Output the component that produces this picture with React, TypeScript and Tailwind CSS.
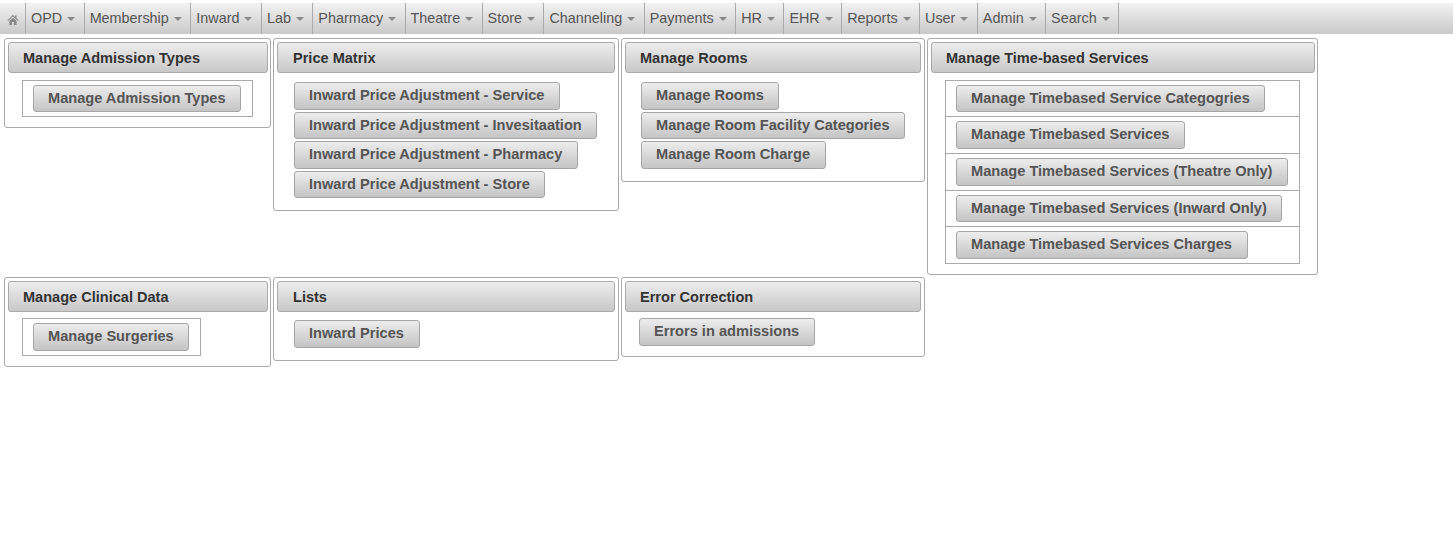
const navItems = ["OPD", "Membership", "Inward", "Lab", "Pharmacy", "Theatre", "Store", "Channeling", "Payments", "HR", "EHR", "Reports", "User", "Admin", "Search"];

const btn =
  "block w-fit h-[27.5px] pl-[14px] pr-[14.6px] rounded-[3px] border border-[#a6a6a6] bg-gradient-to-b from-[#ededed] to-[#c4c4c4] text-[14.6px] leading-[24px] font-bold text-[#555555] whitespace-nowrap";

function Btn({ label }: { label: string }) {
  return <div className={btn}>{label}</div>;
}

function Panel({ title, className, headerClass = "pl-[14px]", children }: { title: string; className: string; headerClass?: string; children: React.ReactNode }) {
  return (
    <div className={`${className} rounded-[3px] border border-[#aaaaaa] bg-white p-[3px]`}>
      <div className={`${headerClass} h-[31px] rounded-[3px] border border-[#aaaaaa] bg-gradient-to-b from-[#ededed] to-[#c8c8c8] text-[14.55px] leading-[31px] font-bold text-[#333333] whitespace-nowrap`}>
        {title}
      </div>
      {children}
    </div>
  );
}

function BoxTable({ labels, className = "mt-[6.8px]" }: { labels: string[]; className?: string }) {
  return (
    <div className={`${className} ml-[14px] w-fit border border-[#aaaaaa]`}>
      {labels.map((l, i) => (
        <div key={l} className={i > 0 ? "border-t border-[#aaaaaa] pt-[4.1px] pr-[11px] pb-[4px] pl-[10px]" : "pt-[4px] pr-[11px] pb-[4.1px] pl-[10px]"}>
          <Btn label={l} />
        </div>
      ))}
    </div>
  );
}

export default function App() {
  return (
    <div className="min-h-[546px] bg-white font-['Liberation_Sans',Arial,sans-serif]">
      <div className="h-[3px]" />
      <div className="flex h-[31px] items-stretch bg-gradient-to-b from-[#f2f2f2] to-[#c9c9c9]">
        <div className="flex w-[26px] items-center justify-center border-r border-[#aaaaaa] pl-[1px] pt-[2px]">
          <svg width="12" height="12" viewBox="0 0 12 12" fill="#888888">
            <path d="M6 1 L8 2.9 V1.6 H9.5 V4.3 L11.5 6.2 L10.9 6.9 L6 2.4 L1.1 6.9 L0.5 6.2 Z" />
            <path d="M2.4 7 L6 3.7 L9.6 7 V11 H7 V8 H5 V11 H2.4 Z" />
          </svg>
        </div>
        {navItems.map((n) => (
          <div key={n} className="flex items-center border-r border-[#aaaaaa] pr-[8.45px] pl-[5px] text-[14.4px] text-[#555555] whitespace-nowrap">
            {n}
            <span className="ml-[5px] mt-[1px] h-0 w-0 border-x-[4px] border-t-[4px] border-x-transparent border-t-[#888888]" />
          </div>
        ))}
      </div>

      <div className="flex items-start gap-[2px] pt-[4px] pl-[4px]">
        <Panel title="Manage Admission Types" className="w-[267px] h-[90px] pr-[2px]">
          <BoxTable labels={["Manage Admission Types"]} />
        </Panel>
        <Panel title="Price Matrix" className="w-[346px] h-[173px]" headerClass="pl-[15px]">
          <div className="mt-[9px] ml-[17px] flex flex-col gap-[2px]">
            <Btn label="Inward Price Adjustment - Service" />
            <Btn label="Inward Price Adjustment - Invesitaation" />
            <Btn label="Inward Price Adjustment - Pharmacy" />
            <Btn label="Inward Price Adjustment - Store" />
          </div>
        </Panel>
        <Panel title="Manage Rooms" className="w-[304px] h-[144px]">
          <div className="mt-[9px] ml-[16px] flex flex-col gap-[2px]">
            <Btn label="Manage Rooms" />
            <Btn label="Manage Room Facility Categories" />
            <Btn label="Manage Room Charge" />
          </div>
        </Panel>
        <Panel title="Manage Time-based Services" className="w-[391px] h-[237px] pr-[2px]">
          <BoxTable
            className="mt-[6.8px]"
            labels={[
              "Manage Timebased Service Categogries",
              "Manage Timebased Services",
              "Manage Timebased Services (Theatre Only)",
              "Manage Timebased Services (Inward Only)",
              "Manage Timebased Services Charges",
            ]}
          />
        </Panel>
      </div>

      <div className="flex items-start gap-[2px] pt-[2px] pl-[4px]">
        <Panel title="Manage Clinical Data" className="w-[267px] h-[90px] pr-[2px]">
          <BoxTable labels={["Manage Surgeries"]} className="mt-[6px]" />
        </Panel>
        <Panel title="Lists" className="w-[346px] h-[84px]" headerClass="pl-[15px]">
          <div className="mt-[8px] ml-[17px]">
            <Btn label="Inward Prices" />
          </div>
        </Panel>
        <Panel title="Error Correction" className="w-[304px] h-[80px]">
          <div className="mt-[6px] ml-[14px]">
            <Btn label="Errors in admissions" />
          </div>
        </Panel>
      </div>
    </div>
  );
}
